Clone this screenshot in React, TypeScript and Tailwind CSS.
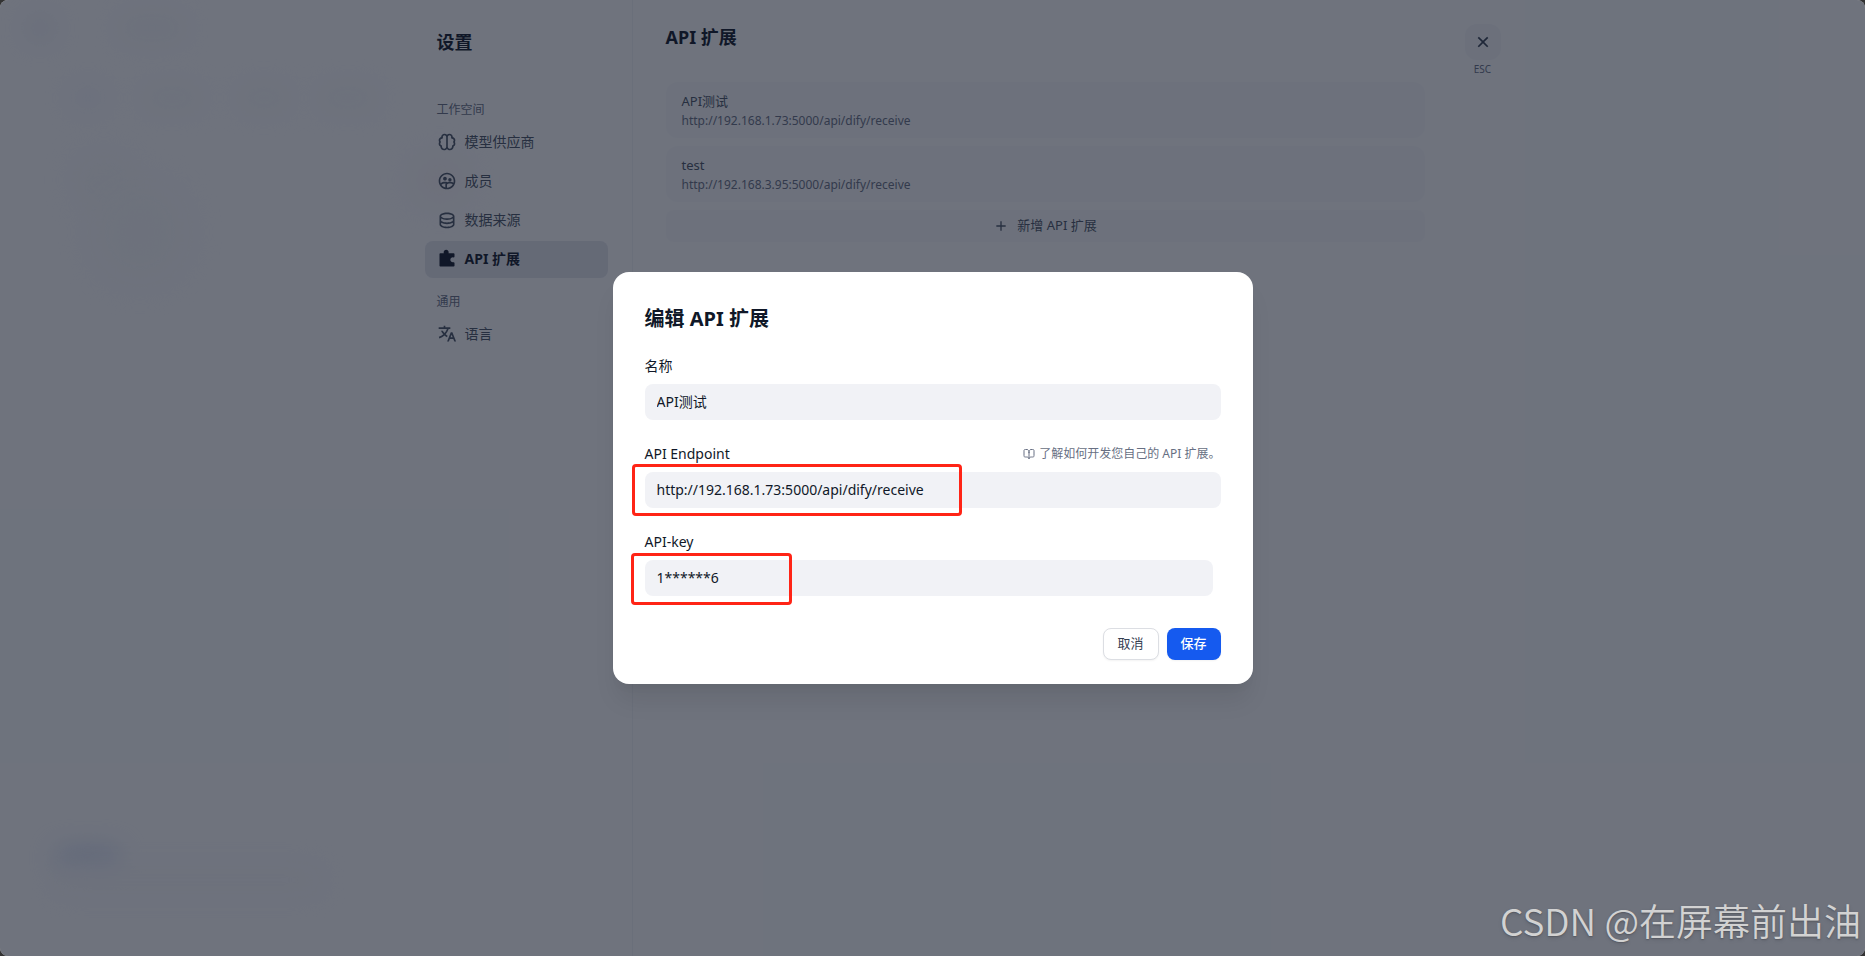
import type { ComponentType, ReactNode } from "react";
import {
  RiAddLine,
  RiBrain2Line,
  RiCloseLine,
  RiDatabase2Line,
  RiGroup2Line,
  RiPuzzle2Fill,
  RiTranslate2,
} from "react-icons/ri";

type Icon = ComponentType<{ className?: string }>;

const groups: { title: string; items: { label: string; icon: Icon; active?: boolean }[] }[] = [
  {
    title: "工作空间",
    items: [
      { label: "模型供应商", icon: RiBrain2Line },
      { label: "成员", icon: RiGroup2Line },
      { label: "数据来源", icon: RiDatabase2Line },
      { label: "API 扩展", icon: RiPuzzle2Fill, active: true },
    ],
  },
  { title: "通用", items: [{ label: "语言", icon: RiTranslate2 }] },
];

const extensions = [
  { name: "API测试", url: "http://192.168.1.73:5000/api/dify/receive" },
  { name: "test", url: "http://192.168.3.95:5000/api/dify/receive" },
];

function BookIcon() {
  return (
    <svg viewBox="0 0 12 12" className="h-3 w-3" fill="none" stroke="currentColor" strokeLinecap="round" strokeLinejoin="round" aria-hidden="true">
      <path d="M6 10.5l-.05-.08c-.35-.52-.52-.78-.75-.97a2 2 0 0 0-.7-.37C4.2 9 3.9 9 3.3 9H2.6c-.56 0-.84 0-1.05-.11a1 1 0 0 1-.44-.44C1 8.24 1 7.96 1 7.4V3.1c0-.56 0-.84.11-1.05a1 1 0 0 1 .44-.44c.21-.11.49-.11 1.05-.11h.2c1.12 0 1.68 0 2.11.22.38.19.68.5.87.87.22.43.22.99.22 2.11M6 10.5V4.7M6 10.5l.05-.08c.35-.52.52-.78.75-.97a2 2 0 0 1 .7-.37C7.8 9 8.1 9 8.7 9h.7c.56 0 .84 0 1.05-.11a1 1 0 0 0 .44-.44c.11-.21.11-.49.11-1.05V3.1c0-.56 0-.84-.11-1.05a1 1 0 0 0-.44-.44c-.21-.11-.49-.11-1.05-.11h-.2c-1.12 0-1.68 0-2.11.22-.38.19-.68.5-.87.87C6 3.02 6 3.58 6 4.7" />
    </svg>
  );
}

function Backdrop() {
  return (
    <div className="pointer-events-none absolute inset-0 overflow-hidden" aria-hidden="true">
      <div className="absolute left-7 top-4 h-6 w-6 rounded-full bg-[#eaecf7] blur-md" />
      <div className="absolute left-30 top-4 h-6 w-16 rounded-full bg-[#f4f5f8] blur-md" />
      <div className="absolute left-18 top-22 h-5 w-8 rounded-full bg-[#f0f1fb] blur-md" />
      <div className="absolute left-36 top-22 h-5 w-14 rounded-full bg-[#f4f5f7] blur-md" />
      <div className="absolute left-60 top-22 h-5 w-12 rounded-full bg-[#f4f5f7] blur-md" />
      <div className="absolute left-80 top-22 h-5 w-14 rounded-full bg-[#f4f5f7] blur-md" />
      <div className="absolute left-20 top-40 h-10 w-12 rounded-full bg-[#f6f7f9] blur-lg" />
      <div className="absolute left-24 top-46 h-24 w-22 rounded-full bg-[#f7f8fa] blur-lg" />
      <div className="absolute left-104 top-40 h-10 w-12 rounded-full bg-[#f8f2f4] blur-lg" />
      <div className="absolute bottom-22 left-14 h-5 w-16 rounded-full bg-[#d5def3] blur-md" />
      <div className="absolute bottom-16 left-14 h-6 w-66 rounded-full bg-[#f7f7fa] blur-md" />
    </div>
  );
}

function Sidebar() {
  return (
    <nav className="w-56 shrink-0 border-r border-[#f1f2f5] pl-4 pr-6 pt-6" aria-label="设置">
      <h1 className="mb-[38px] px-3 text-lg leading-9 font-bold text-[#101828]">设置</h1>
      {groups.map((group) => (
        <section key={group.title} className="mb-3">
          <h2 className="mb-0.5 px-3 text-xs leading-6 text-[#676f83]">{group.title}</h2>
          <div className="flex flex-col gap-0.5">
            {group.items.map(({ label, icon: ItemIcon, active }) => (
              <button
                key={label}
                type="button"
                className={
                  active
                    ? "flex h-[37px] items-center gap-2 rounded-lg bg-[#e3e5ec] px-3 pb-0.5 text-sm font-bold text-[#101828]"
                    : "flex h-[37px] items-center gap-2 rounded-lg px-3 pb-0.5 text-sm text-[#495464]"
                }
              >
                <ItemIcon className="h-5 w-5 shrink-0" />
                {label}
              </button>
            ))}
          </div>
        </section>
      ))}
    </nav>
  );
}

function Extensions() {
  return (
    <main className="min-w-0 flex-1 pt-6 pr-8 pl-[33px]">
      <h2 className="mb-8 text-lg leading-[26px] font-bold text-[#101828]">API 扩展</h2>
      <ul className="flex flex-col gap-2">
        {extensions.map((item) => (
          <li key={item.url} className="rounded-xl bg-[#f7f8fa] px-4 pt-[9px] pb-[7px]">
            <div className="text-[13px] leading-5 text-[#495464]">{item.name}</div>
            <div className="text-xs leading-5 text-[#676f83]">{item.url}</div>
          </li>
        ))}
      </ul>
      <button type="button" className="mt-2 flex h-8 w-full items-center justify-center gap-2 rounded-lg bg-[#f7f8fa] text-[13px] text-[#495464]">
        <RiAddLine className="h-4 w-4" />
        新增 API 扩展
      </button>
    </main>
  );
}

type FieldProps = {
  id: string;
  label: string;
  value: string;
  narrow?: boolean;
  aside?: ReactNode;
  mark?: ReactNode;
};

function Field({ id, label, value, narrow, aside, mark }: FieldProps) {
  return (
    <div className="py-2">
      <div className="flex h-9 items-center justify-between">
        <label htmlFor={id} className="text-sm text-[#101828]">
          {label}
        </label>
        {aside}
      </div>
      <div className={narrow ? "relative mr-2" : "relative"}>
        <input
          id={id}
          defaultValue={value}
          className="block h-9 w-full rounded-lg bg-[#f1f2f6] px-3 pb-0.5 text-sm text-[#101828] outline-none"
        />
        {mark}
      </div>
    </div>
  );
}

function EditDialog() {
  return (
    <div
      role="dialog"
      aria-modal="true"
      aria-labelledby="dialog-title"
      className="w-full max-w-[640px] rounded-2xl bg-white px-8 pt-8 pb-6 shadow-[0_20px_24px_-4px_rgba(9,9,11,0.08),0_8px_8px_-4px_rgba(9,9,11,0.03)]"
    >
      <h2 id="dialog-title" className="mb-1.5 text-xl leading-[30px] font-bold text-[#101828]">
        编辑 API 扩展
      </h2>
      <Field id="name" label="名称" value="API测试" />
      <Field
        id="endpoint"
        label="API Endpoint"
        value="http://192.168.1.73:5000/api/dify/receive"
        aside={
          <a href="#docs" className="flex items-center gap-1 text-xs text-[#676f83]">
            <BookIcon />
            了解如何开发您自己的 API 扩展。
          </a>
        }
        mark={<div className="pointer-events-none absolute -top-2 -left-[13px] h-[52px] w-[330px] rounded-sm border-3 border-[#ff2416]" />}
      />
      <Field
        id="key"
        label="API-key"
        narrow
        value="1******6"
        mark={<div className="pointer-events-none absolute -top-[7px] -left-[14px] h-[52px] w-[161px] rounded-sm border-3 border-[#ff2416]" />}
      />
      <div className="mt-6 flex justify-end gap-2">
        <button type="button" className="h-8 w-14 rounded-lg border border-[#dcdee3] bg-white text-[13px] text-[#354052] shadow-xs">
          取消
        </button>
        <button type="button" className="h-8 w-[54px] rounded-lg bg-[#155aef] text-[13px] font-medium text-white shadow-xs">
          保存
        </button>
      </div>
    </div>
  );
}

export default function App() {
  return (
    <div className="min-h-screen bg-[#333333] font-['Noto_Sans','Noto_Sans_CJK_SC',sans-serif]">
      <div className="relative min-h-screen overflow-hidden rounded-lg bg-[#fcfcfd]">
        <Backdrop />
        <div className="relative grid min-h-screen grid-cols-[1fr_minmax(0,1048px)_1fr]">
          <div />
          <div className="flex">
            <Sidebar />
            <Extensions />
          </div>
          <div className="flex flex-col items-start pt-6 pl-2">
            <div className="flex flex-col items-center gap-[3px]">
              <button type="button" aria-label="关闭" className="flex h-9 w-9 items-center justify-center rounded-xl bg-[#f4f5f8] text-[#354052]">
                <RiCloseLine className="h-5 w-5" />
              </button>
              <span className="text-[10px] leading-3 text-[#676f83]">ESC</span>
            </div>
          </div>
        </div>
        <div className="absolute inset-0 flex items-center justify-center bg-[#101828]/60">
          <EditDialog />
        </div>
        <div className="pointer-events-none absolute right-1 bottom-2.5 text-[37px] leading-[52px] font-[350] whitespace-nowrap text-[#d2d2d2] font-['Noto_Sans_CJK_SC',sans-serif] text-shadow-md">
          CSDN @在屏幕前出油
        </div>
      </div>
    </div>
  );
}
